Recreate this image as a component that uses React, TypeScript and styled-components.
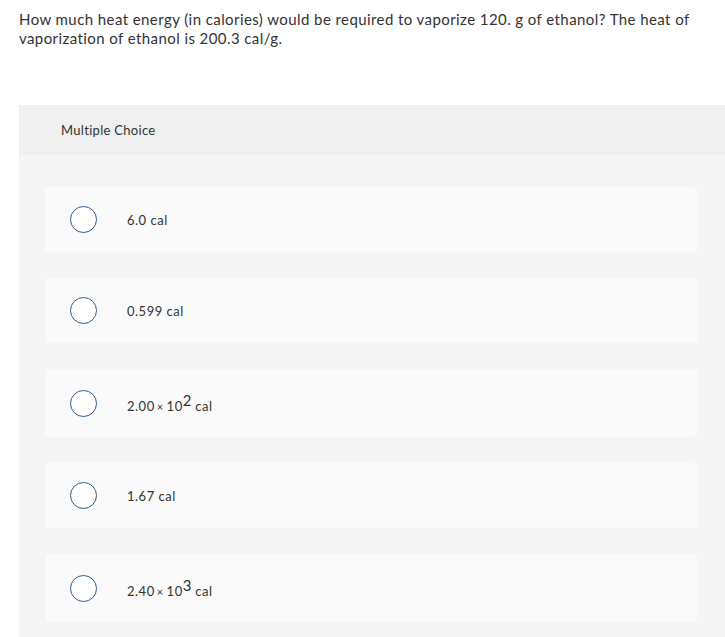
import React from "react";
import styled, { createGlobalStyle } from "styled-components";

const Global = createGlobalStyle`
  html, body { margin: 0; padding: 0; background: #ffffff; }
  body { font-family: "Lato", "Open Sans", sans-serif; color: #333333; }
`;

const Page = styled.div`
  padding: 10px 0 0 19px;
  width: 725px;
  box-sizing: border-box;
`;

const Question = styled.p`
  margin: 0;
  font-size: 15px;
  line-height: 19px;
  letter-spacing: 0.42px;
  color: #333333;
  padding-right: 20px;
`;

const Panel = styled.section`
  margin-top: 57px;
  background: #f5f5f5;
  padding-bottom: 20px;
`;

const Header = styled.div`
  height: 50px;
  background: #f0f0f0;
  display: flex;
  align-items: center;
  padding-left: 42px;
  font-size: 13px;
  letter-spacing: 0.3px;
  color: #333333;
`;

const List = styled.div`
  display: flex;
  flex-direction: column;
  gap: 26px;
  padding: 32px 28px 0 26px;
`;

const Option = styled.label<{ $tall?: boolean }>`
  display: flex;
  align-items: center;
  background: #fafafa;
  min-height: ${(p) => (p.$tall ? "68px" : "65px")};
  padding-left: 25px;
  border-radius: 2px;
`;

const Radio = styled.span`
  width: 25px;
  height: 25px;
  border-radius: 50%;
  border: 1.5px solid #2f5b88;
  background: #ffffff;
  flex: none;
`;

const Answer = styled.span<{ $drop?: boolean }>`
  margin-left: 30px;
  font-size: 13px;
  letter-spacing: 0.5px;
  color: #333333;
  padding-top: ${(p) => (p.$drop ? "6px" : "0")};
`;

const Sup = styled.sup`
  font-size: 15px;
  line-height: 0;
  vertical-align: 5px;
  letter-spacing: 0;
`;

const Times = styled.span`
  font-size: 11px;
  margin: 0 3px 0 2px;
`;

export default function App() {
  return (
    <>
      <Global />
      <Page>
        <Question>
          How much heat energy (in calories) would be required to vaporize 120. g of ethanol? The heat of vaporization of ethanol is 200.3 cal/g.
        </Question>
        <Panel>
          <Header>Multiple Choice</Header>
          <List>
            <Option>
              <Radio />
              <Answer>6.0 cal</Answer>
            </Option>
            <Option>
              <Radio />
              <Answer>0.599 cal</Answer>
            </Option>
            <Option $tall>
              <Radio />
              <Answer $drop>
                2.00<Times>×</Times>10<Sup>2</Sup> cal
              </Answer>
            </Option>
            <Option>
              <Radio />
              <Answer>1.67 cal</Answer>
            </Option>
            <Option $tall>
              <Radio />
              <Answer $drop>
                2.40<Times>×</Times>10<Sup>3</Sup> cal
              </Answer>
            </Option>
          </List>
        </Panel>
      </Page>
    </>
  );
}
